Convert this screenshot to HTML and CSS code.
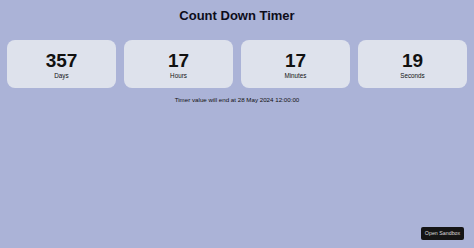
FILE: index.html
```html
<!DOCTYPE html>
<html lang="en">
<head>
    <meta charset="UTF-8">
    <meta name="viewport" content="width=device-width, initial-scale=1.0">
    <title>Count Down Timer</title>
    <link rel="stylesheet" href="styles.css">
</head>
<body>
    <h1>Count Down Timer</h1>
    <div class="timer">
        <div class="unit">
            <span class="value">357</span>
            <span class="label">Days</span>
        </div>
        <div class="unit">
            <span class="value">17</span>
            <span class="label">Hours</span>
        </div>
        <div class="unit">
            <span class="value">17</span>
            <span class="label">Minutes</span>
        </div>
        <div class="unit">
            <span class="value">19</span>
            <span class="label">Seconds</span>
        </div>
    </div>
    <p class="end-date">Timer value will end at 28 May 2024 12:00:00</p>
    <a href="javascript:void(0);" class="sandbox-btn">Open Sandbox</a>
</body>
</html>
```
FILE: styles.css
```css
body {
    margin: 0;
    height: 248px;
    background-color: #abb3d7;
    font-family: "Liberation Sans", Arial, sans-serif;
    color: #111;
}
h1 {
    margin: 0;
    padding-top: 8px;
    font-size: 13px;
    line-height: 16px;
    text-align: center;
    color: #0d0d1a;
}
.timer {
    display: flex;
    gap: 8px;
    padding: 0 7px;
    margin-top: 16px;
}
.unit {
    flex: 1;
    height: 48px;
    background-color: #dee2ec;
    border-radius: 8px;
    display: flex;
    flex-direction: column;
    align-items: center;
    justify-content: center;
}
.value {
    font-size: 19px;
    font-weight: bold;
    line-height: 20px;
    margin-top: 4px;
}
.label {
    font-size: 6.3px;
    line-height: 10px;
}
.end-date {
    margin: 8px 0 0;
    font-size: 6.2px;
    text-align: center;
}
.sandbox-btn {
    position: fixed;
    right: 10px;
    bottom: 8px;
    width: 43px;
    height: 13px;
    line-height: 13px;
    text-align: center;
    background-color: #151515;
    border-radius: 2px;
    color: #ddd;
    font-size: 5.3px;
    text-decoration: none;
}
```
